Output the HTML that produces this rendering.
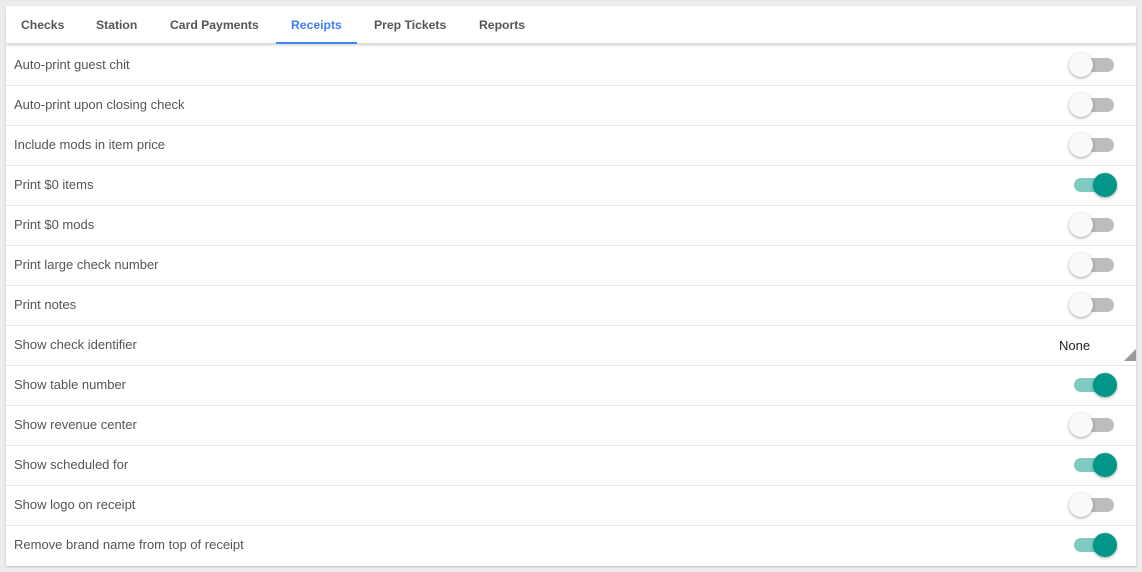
<!DOCTYPE html>
<html><head><style>
body{margin:0;background:#ececec;font-family:"Liberation Sans",Arial,sans-serif;}
.card{position:absolute;left:6px;top:6px;width:1130px;height:560px;background:#fff;box-shadow:0 1px 2px rgba(0,0,0,.2);overflow:hidden;}
.tabs{height:37px;position:relative;border-bottom:1px solid #ddd;box-shadow:0 2px 2px rgba(0,0,0,.12);}
.tab{position:absolute;top:12px;font-size:12.2px;font-weight:bold;color:#555;}
.ul{position:absolute;left:270px;width:81px;top:36px;height:2px;background:#4285f4;}
.row{height:39px;border-bottom:1px solid #e8e8e8;position:relative;font-size:13px;color:#555;}
.row span{position:absolute;left:8px;top:11px;}
.tg{position:absolute;left:1068px;top:12px;width:40px;height:14px;border-radius:7px;background:#bdbdbd;}
.tg i{position:absolute;left:-5px;top:-5px;width:24px;height:24px;border-radius:50%;background:#fafafa;box-shadow:0 1px 3px rgba(0,0,0,.35);}
.tg.on{background:#7fcbc3;}
.tg.on i{left:19px;background:#009688;}
.sel{position:absolute;left:1053px;top:12px;color:#222;}
.tri{position:absolute;right:0;bottom:4px;width:0;height:0;border-left:12px solid transparent;border-bottom:12px solid #999;}
</style></head><body>
<div class="card">
<div class="tabs">
<div class="tab" style="left:15px">Checks</div>
<div class="tab" style="left:90px">Station</div>
<div class="tab" style="left:164px">Card Payments</div>
<div class="tab" style="left:285px;color:#3f7ef5">Receipts</div>
<div class="tab" style="left:368px">Prep Tickets</div>
<div class="tab" style="left:473px">Reports</div>
<div class="ul"></div>
</div>
<div style="height:2px"></div>
<div class="row"><span>Auto-print guest chit</span><div class="tg"><i></i></div></div>
<div class="row"><span>Auto-print upon closing check</span><div class="tg"><i></i></div></div>
<div class="row"><span>Include mods in item price</span><div class="tg"><i></i></div></div>
<div class="row"><span>Print $0 items</span><div class="tg on"><i></i></div></div>
<div class="row"><span>Print $0 mods</span><div class="tg"><i></i></div></div>
<div class="row"><span>Print large check number</span><div class="tg"><i></i></div></div>
<div class="row"><span>Print notes</span><div class="tg"><i></i></div></div>
<div class="row"><span>Show check identifier</span><div class="sel">None</div><div class="tri"></div></div>
<div class="row"><span>Show table number</span><div class="tg on"><i></i></div></div>
<div class="row"><span>Show revenue center</span><div class="tg"><i></i></div></div>
<div class="row"><span>Show scheduled for</span><div class="tg on"><i></i></div></div>
<div class="row"><span>Show logo on receipt</span><div class="tg"><i></i></div></div>
<div class="row" style="border-bottom:none"><span>Remove brand name from top of receipt</span><div class="tg on"><i></i></div></div>
</div>
</body></html>
